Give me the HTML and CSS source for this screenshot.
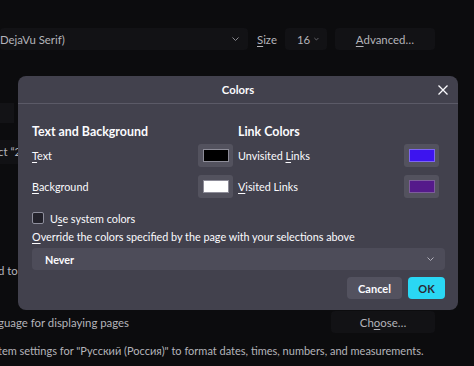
FILE: index.html
```html
<!DOCTYPE html>
<html lang="en">
<head>
  <meta charset="UTF-8">
  <title>Colors</title>
  <link rel="stylesheet" href="styles.css">
</head>
<body>

  <div class="page">
    <div class="font-row">
      <div class="select font-select">DejaVu Serif)
        <svg class="chev" width="7" height="4" viewBox="0 0 7 4"><path d="M0.5 0.5 L3.5 3.5 L6.5 0.5" stroke="#8a8a90" fill="none"/></svg>
      </div>
      <span class="label"><u>S</u>ize</span>
      <div class="select size-select">16
        <svg class="chev" width="7" height="4" viewBox="0 0 7 4"><path d="M0.5 0.5 L3.5 3.5 L6.5 0.5" stroke="#8a8a90" fill="none"/></svg>
      </div>
      <div class="button"><u>A</u>dvanced…</div>
    </div>

    <div class="hidden-box"></div>
    <div class="hidden-text quote">ct “2</div>
    <div class="hidden-text to">d to</div>

    <div class="lang-row">
      <span>guage for displaying pages</span>
      <div class="button choose">Ch<u>o</u>ose…</div>
    </div>
    <p class="note">tem settings for "Русский (Россия)" to format dates, times, numbers, and measurements.</p>
  </div>

  <!-- диалог поверх страницы -->
  <div class="dialog">
    <div class="dialog-title">
      Colors
      <svg class="close" width="12" height="12" viewBox="0 0 12 12">
        <path d="M1.5 1.5 L10.5 10.5 M10.5 1.5 L1.5 10.5" stroke="#fbfbfe" stroke-width="1.3" fill="none"/>
      </svg>
    </div>

    <div class="dialog-body">
      <div class="columns">
        <div class="col">
          <h2>Text and Background</h2>
          <div class="row">
            <span><u>T</u>ext</span>
            <div class="swatch"><div class="chip black"></div></div>
          </div>
          <div class="row">
            <span><u>B</u>ackground</span>
            <div class="swatch"><div class="chip white"></div></div>
          </div>
        </div>
        <div class="col">
          <h2>Link Colors</h2>
          <div class="row">
            <span>Unvisited <u>L</u>inks</span>
            <div class="swatch"><div class="chip unvisited"></div></div>
          </div>
          <div class="row">
            <span><u>V</u>isited Links</span>
            <div class="swatch"><div class="chip visited"></div></div>
          </div>
        </div>
      </div>

      <label class="check"><span class="box"></span><span>U<u>s</u>e system colors</span></label>

      <div class="override"><u>O</u>verride the colors specified by the page with your selections above</div>
      <div class="never">Never
        <svg width="7" height="4" viewBox="0 0 7 4"><path d="M0.5 0.5 L3.5 3.5 L6.5 0.5" stroke="#b0afba" fill="none"/></svg>
      </div>

      <div class="actions">
        <button class="cancel">Cancel</button>
        <button class="ok">OK</button>
      </div>
    </div>
  </div>

</body>
</html>
```

FILE: styles.css
```css
body {
  margin: 0;
  background-color: #0c0c0e;
  font-family: 'Lato', 'Noto Sans', sans-serif;
  font-size: 11.4px;
  color: #fbfbfe;
  width: 474px;
  height: 366px;
  overflow: hidden;
  position: relative;
}

u {
  text-decoration-thickness: 1px;
  text-underline-offset: 2px;
}

.page {
  color: #b4b4ba;
  padding-top: 28px;
}

.font-row {
  display: flex;
  align-items: center;
  height: 22px;
}

.select {
  display: flex;
  align-items: center;
  justify-content: space-between;
  height: 22px;
  background: #121215;
  border-radius: 4px;
  box-sizing: border-box;
}

.font-select {
  width: 248px;
  padding-right: 9px;
}

.size-select {
  width: 42px;
  margin-left: 8px;
  padding: 0 8px 0 12px;
  justify-content: flex-start;
  gap: 4px;
}

.label {
  margin-left: 9px;
}

.button {
  height: 22px;
  background: #121215;
  border-radius: 4px;
  display: flex;
  align-items: center;
  justify-content: center;
}

.font-row .button {
  width: 100px;
  margin-left: 8px;
}

.hidden-box {
  width: 14px;
  height: 20px;
  background: #131316;
  margin-top: 53px;
}

.hidden-text {
  height: 24px;
  line-height: 24px;
  margin-left: -2px;
  white-space: nowrap;
}

.quote {
  margin-top: 17px;
  width: 20px;
  background: #111114;
}

.to {
  margin-top: 95px;
}

.lang-row {
  display: flex;
  align-items: center;
  justify-content: space-between;
  width: 437px;
  margin-top: 28px;
  margin-left: -2px;
}

.choose {
  width: 104px;
}

.note {
  margin: 11px 0 0 -2px;
  font-size: 11px;
  height: 14px;
  line-height: 14px;
  white-space: nowrap;
}

/* Диалог */
.dialog {
  position: absolute;
  left: 18px;
  top: 76px;
  width: 440px;
  height: 234px;
  background: #42414d;
  border-radius: 8px;
  font-size: 10.8px;
}

.dialog-title {
  height: 27px;
  border-bottom: 1px solid #5b5a67;
  display: flex;
  align-items: center;
  justify-content: center;
  font-weight: 700;
  font-size: 11.3px;
  position: relative;
}

.close {
  position: absolute;
  right: 9px;
  top: 8px;
}

.dialog-body {
  padding: 20px 13px 11px 14px;
}

.columns {
  display: grid;
  grid-template-columns: 201px 201px;
  gap: 5px;
}

h2 {
  font-size: 12.4px;
  font-weight: 700;
  margin: 0 0 4px;
  line-height: 16px;
}

.row {
  display: flex;
  align-items: center;
  justify-content: space-between;
  height: 23px;
  margin-bottom: 8px;
}

.swatch {
  width: 35px;
  height: 23px;
  background: #53525e;
  border-radius: 3px;
  display: flex;
  align-items: center;
  justify-content: center;
}

.chip {
  width: 24px;
  height: 11px;
  border: 1px solid #8d8c98;
}

.black { background: #000000; }
.white { background: #ffffff; }
.unvisited { background: #3d14ef; border-color: #7d66f0; }
.visited { background: #551a8b; border-color: #7d5c9c; }

.check {
  display: flex;
  align-items: center;
  gap: 6px;
  margin-top: 4px;
  height: 16px;
}

.box {
  width: 10px;
  height: 10px;
  background: #23222b;
  border: 1px solid #8f8f9d;
  border-radius: 2px;
}

.override {
  margin-top: 3px;
  height: 16px;
  line-height: 16px;
}

.never {
  margin-top: 3px;
  height: 22px;
  background: #4d4c59;
  border-radius: 4px;
  display: flex;
  align-items: center;
  justify-content: space-between;
  padding: 0 11px 0 13px;
  font-weight: 700;
}

.actions {
  display: flex;
  justify-content: flex-end;
  gap: 6px;
  margin-top: 7px;
}

.actions button {
  height: 22px;
  border: none;
  border-radius: 4px;
  font-family: inherit;
  font-size: 11px;
  font-weight: 700;
  padding: 0;
}

.cancel {
  width: 55px;
  background: #53525f;
  color: #fbfbfe;
}

.ok {
  width: 37px;
  background: #2ad7f4;
  color: #2b2a33;
}
```
